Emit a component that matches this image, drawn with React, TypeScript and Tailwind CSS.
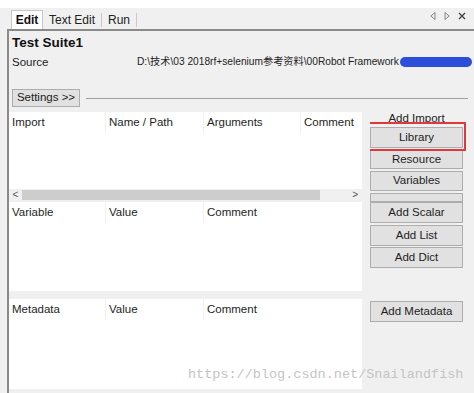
import React from "react";

const font = { fontFamily: '"Liberation Sans", "Noto Sans CJK SC", sans-serif' };

function Btn({ label, className = "" }: { label: string; className?: string }) {
  return (
    <div
      className={`w-[93px] h-[21px] border border-[#adadad] bg-[#e1e1e1] flex items-center justify-center text-[11.5px] text-[#1e1e1e] ${className}`}
    >
      {label}
    </div>
  );
}

function Header({ cols }: { cols: string[] }) {
  const widths = ["w-[97px]", "w-[98px]", "w-[97px]", "w-[61px]"];
  return (
    <div className="flex h-[21px] items-center">
      {cols.map((c, i) => (
        <div
          key={i}
          className={`${widths[i]} h-full flex items-center pl-[3px] text-[11.5px] text-[#1e1e1e] ${
            i < cols.length - 1 ? "border-r border-[#f0f0f0]" : ""
          }`}
        >
          {c}
        </div>
      ))}
    </div>
  );
}

export default function App() {
  return (
    <div className="relative w-[474px] h-[393px] bg-[#f0f0f0] overflow-hidden" style={font}>
      {/* top white strip */}
      <div className="h-[8px] bg-white" />
      {/* tab strip */}
      <div className="h-[21px] flex items-end pl-[11px] relative">
        <div className="h-[19px] w-[32px] bg-white border border-b-0 border-[#c8c8c8] flex items-center justify-center text-[12px] font-semibold text-[#111]">
          Edit
        </div>
        <div className="h-[19px] flex items-center">
          <span className="px-[6px] text-[12px] text-[#222]">Text Edit</span>
          <span className="w-px h-[14px] bg-[#c8c8c8]" />
          <span className="px-[6px] text-[12px] text-[#222]">Run</span>
          <span className="w-px h-[14px] bg-[#c8c8c8]" />
        </div>
        <div className="absolute right-[8px] top-[4px] flex items-center gap-[8px] text-[#777]">
          <svg width="6" height="8" viewBox="0 0 6 8">
            <path d="M5 0.5 L0.8 4 L5 7.5 Z" fill="none" stroke="#888" strokeWidth="1" />
          </svg>
          <svg width="6" height="8" viewBox="0 0 6 8">
            <path d="M1 0.5 L5.2 4 L1 7.5 Z" fill="none" stroke="#888" strokeWidth="1" />
          </svg>
          <svg width="8" height="8" viewBox="0 0 8 8">
            <path d="M1 1 L7 7 M7 1 L1 7" stroke="#444" strokeWidth="1.4" />
          </svg>
        </div>
      </div>
      {/* main box */}
      <div className="ml-[7px] border-t-2 border-l-2 border-[#8a8a8a] h-[364px]">
        <div className="pl-[3px] pt-[4px]">
          <div className="text-[13.5px] font-bold text-[#111] leading-[16px]">Test Suite1</div>
          <div className="flex mt-[4px] text-[11.5px] text-[#222] leading-[14px]">
            <span className="w-[125px] shrink-0">Source</span>
            <span className="whitespace-nowrap text-[10.2px] shrink-0">
              D:\技术\03 2018rf+selenium参考资料\00Robot Framework
            </span>
            <span className="ml-[1px] w-[72px] h-[10px] mt-[2px] rounded-full bg-[#2b4fd8] shrink-0" />
          </div>
          <div className="flex items-center mt-[20px]">
            <div className="w-[68px] h-[18px] border border-[#adadad] bg-[#e1e1e1] flex items-center justify-center text-[11.5px] text-[#222]">
              Settings &gt;&gt;
            </div>
            <div className="ml-[6px] flex-1 mr-[6px] h-px bg-[#a0a0a0]" />
          </div>
        </div>
        {/* sections */}
        <div className="mt-[5px] flex">
          <div className="w-[353px]">
            {/* import */}
            <div className="h-[77px] bg-white">
              <Header cols={["Import", "Name / Path", "Arguments", "Comment"]} />
            </div>
            <div className="h-[12px] flex items-center bg-[#f0f0f0]">
              <span className="w-[13px] text-center text-[10px] text-[#555] leading-none">&lt;</span>
              <div className="w-[298px] h-[10px] bg-[#cdcdcd]" />
              <span className="flex-1 text-right pr-[4px] text-[10px] text-[#555] leading-none">&gt;</span>
            </div>
            {/* variable */}
            <div className="h-[89px] bg-white mt-px">
              <Header cols={["Variable", "Value", "Comment"]} />
            </div>
            <div className="h-[8px]" />
            {/* metadata */}
            <div className="h-[90px] bg-white">
              <Header cols={["Metadata", "Value", "Comment"]} />
            </div>
          </div>
          <div className="flex-1 pl-[8px]">
            <div className="h-[90px] overflow-hidden flex flex-col">
              <div className="w-[93px] h-[13px] text-center text-[11.5px] text-[#222] leading-[13px]">
                Add Import
              </div>
              <div className="mt-[2px] relative">
                <Btn label="Library" />
                <div className="absolute -left-[4px] -top-[5px] w-[100px] h-[29px] border-2 border-[#e0383c]" />
              </div>
              <Btn label="Resource" className="mt-[2px]" />
              <Btn label="Variables" className="mt-[2px]" />
              <Btn label="" className="mt-[2px]" />
            </div>
            <div className="h-[97px] flex flex-col">
              <Btn label="Add Scalar" />
              <Btn label="Add List" className="mt-[2px]" />
              <Btn label="Add Dict" className="mt-[1px]" />
            </div>
            <Btn label="Add Metadata" className="mt-[2px]" />
          </div>
        </div>
      </div>
      {/* watermark */}
      <div
        className="absolute left-[188px] top-[365px] text-[13.5px] text-[#c4c4c4] whitespace-nowrap leading-[20px]"
        style={{ fontFamily: '"Liberation Mono", monospace' }}
      >
        https://blog.csdn.net/Snailandfish
      </div>
    </div>
  );
}
